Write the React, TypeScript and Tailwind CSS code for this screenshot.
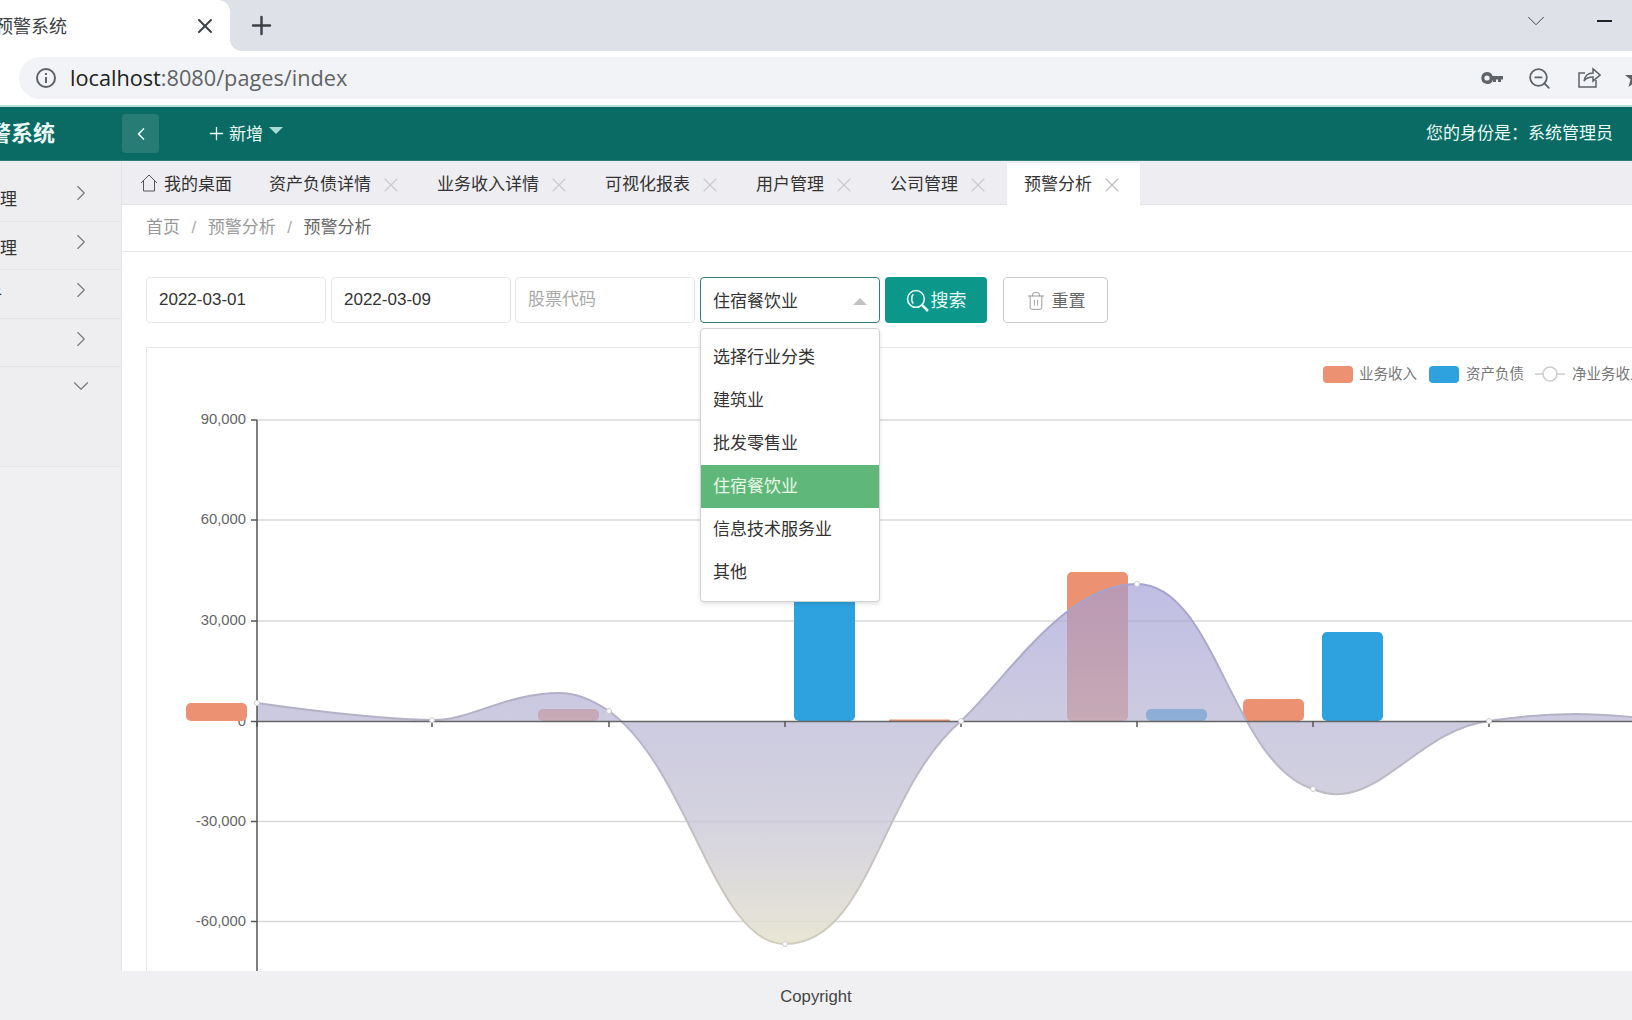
import { ChevronDown, ChevronLeft, ChevronRight, Plus, Trash2, X, ZoomOut } from 'lucide-react'

const menu = [
  { label: '资产管理', text: 'ml-[-51px]' },
  { label: '负债管理', text: 'ml-[-51px]' },
  { label: '预警分析', text: 'ml-[-66px]' },
  { label: '', text: '' },
  { label: '', text: '' },
]

const tabs = ['资产负债详情', '业务收入详情', '可视化报表', '用户管理', '公司管理']

const options = ['选择行业分类', '建筑业', '批发零售业', '住宿餐饮业', '信息技术服务业', '其他']

const yLabels = [
  { y: 419.5, text: '90,000' },
  { y: 519.5, text: '60,000' },
  { y: 620.5, text: '30,000' },
  { y: 721, text: '0' },
  { y: 821, text: '-30,000' },
  { y: 921, text: '-60,000' },
]

const xTicks = [257, 432, 609, 785, 961, 1137, 1313, 1489]

const markers = [
  [257, 703],
  [432, 720],
  [609, 711],
  [785, 944],
  [961, 721],
  [1137, 584],
  [1313, 789],
  [1489, 721],
]

const bars = [
  { x: 186, y: 703, h: 18, c: '#ec9171' },
  { x: 538, y: 709, h: 12, c: '#ec9171' },
  { x: 794, y: 560, h: 161, c: '#2ea1df' },
  { x: 889, y: 719.5, h: 2, c: '#ec9171' },
  { x: 1067, y: 572, h: 149, c: '#ec9171' },
  { x: 1146, y: 709, h: 12, c: '#2ea1df' },
  { x: 1243, y: 699, h: 22, c: '#ec9171' },
  { x: 1322, y: 632, h: 89, c: '#2ea1df' },
]

const curve =
  'M257,703 C320,712 385,719 432,720 C470,721 505,693 560,693 C580,693 597,703 609,711 C690,770 715,944 785,944 C870,944 880,790 961,721 C1010,675 1065,584 1137,584 C1215,584 1232,764 1313,789 C1375,816 1415,730 1489,721 C1515,717 1545,714 1575,714 C1600,714 1620,716 1632,717'

function BrowserBar() {
  return (
    <>
      <div className="flex h-[51px] shrink-0">
        <div className="w-[230px] bg-[#dee1e8]">
          <div className="flex h-full items-center justify-between rounded-tr-xl bg-white pr-[13px]">
            <span className="mt-[3px] ml-[-5px] text-[18px] text-[#3c4043]">预警系统</span>
            <X className="h-[24px] w-[24px] text-[#3c4043]" strokeWidth={2} />
          </div>
        </div>
        <div className="flex-1 bg-white">
          <div className="flex h-full items-center rounded-bl-xl bg-[#dee1e8]">
            <Plus className="ml-[17px] h-[29px] w-[29px] text-[#3c4043]" strokeWidth={2} />
            <ChevronDown className="mb-[10px] ml-auto h-[30px] w-[30px] text-[#3c4043]" strokeWidth={0.75} />
            <div className="mr-[20px] mb-[9px] ml-[46px] h-[1.5px] w-[15px] bg-[#222]" />
          </div>
        </div>
      </div>
      <div className="flex h-[54px] shrink-0 items-center bg-white pl-[19px]">
        <div className="flex h-[42px] flex-1 items-center rounded-l-full bg-[#f1f3f6]">
          <svg viewBox="0 0 22 22" className="ml-[16px] h-[22px] w-[22px]" fill="none" stroke="#5f6368" strokeWidth="2">
            <circle cx="11" cy="11" r="9" />
            <path d="M11 10v6" />
            <path d="M11 6v2" />
          </svg>
          <div className="mt-[1px] ml-[13px] font-['Open_Sans',sans-serif] text-[21.7px] text-[#5f6368]">
            <span className="text-[#202124]">localhost</span>:8080/pages/index
          </div>
          <svg viewBox="0 0 22 12" className="ml-auto h-[12px] w-[22px]" fill="#5f6368">
            <path d="M6 0a6 6 0 0 1 5.6 4H22v3.5h-2V10h-3V7.500h-2V10h-3V8a6 6 0 1 1-6-8Zm0 3.400a2.600 2.600 0 1 0 0 5.200 2.600 2.600 0 0 0 0-5.200Z" />
          </svg>
          <ZoomOut className="ml-[24px] h-[25px] w-[25px] text-[#5f6368]" strokeWidth={1.75} />
          <svg viewBox="0 0 24 24" className="ml-[25px] h-[24px] w-[24px]" fill="none" stroke="#5f6368" strokeWidth="1.5">
            <path d="M19 14v7H2V7h6" />
            <path d="M7 15c1-6 5-8 9-8V3l7 6-7 6v-4c-4 0-7 1-9 4Z" />
          </svg>
          <svg viewBox="0 0 24 24" className="mr-[-15px] ml-[22px] h-[24px] w-[24px]" fill="#5f6368">
            <path d="m12 2 3 7h7l-5.500 4.500 2 7.500-6.500-4.500L5.500 21l2-7.500L2 9h7Z" />
          </svg>
        </div>
      </div>
      <div className="h-[2px] shrink-0 bg-[#b9e0d9]" />
    </>
  )
}

function Header() {
  return (
    <div className="flex h-[54px] shrink-0 items-center border-b border-[#2d7f78] bg-[#096b64] text-[#eafaf7]">
      <div className="flex w-[122px] shrink-0 justify-end overflow-hidden pr-[67px]">
        <span className="shrink-0 text-[22px] font-bold">预警系统</span>
      </div>
      <div className="flex h-[39px] w-[37px] items-center justify-center rounded-sm bg-[#277d76]">
        <ChevronLeft className="h-[20px] w-[20px]" strokeWidth={2} />
      </div>
      <Plus className="ml-[47px] h-[21px] w-[21px]" strokeWidth={1.5} />
      <span className="mt-[2px] ml-[2px] text-[17px]">新增</span>
      <div className="mb-[6px] ml-[6px] h-0 w-0 border-x-[7px] border-t-[7px] border-x-transparent border-t-[#a8dcd4]" />
      <span className="mr-[19px] ml-auto text-[17px]">{'您的身份是\uFF1A系统管理员'}</span>
    </div>
  )
}

function Sidebar() {
  return (
    <div className="flex w-[122px] shrink-0 flex-col overflow-hidden border-r border-[#e4e4e6] bg-[#eeeef0] pt-[12px] text-[17px] text-[#333]">
      {menu.map((item, i) => (
        <div
          key={i}
          className={`flex shrink-0 justify-between border-b border-[#e6e6e8] pr-[27px] ${i === 4 ? 'h-[100px]' : 'h-[48.5px]'}`}
        >
          <span className={`mt-[14px] shrink-0 ${item.text}`}>{item.label}</span>
          {i === 4 ? (
            <ChevronDown className="mt-[6px] h-[26px] w-[26px] text-[#777]" strokeWidth={1} />
          ) : (
            <ChevronRight className="mt-[7px] h-[26px] w-[26px] text-[#777]" strokeWidth={1} />
          )}
        </div>
      ))}
      <div className="flex-1 bg-[#f0f0f2]" />
    </div>
  )
}

function TabBar() {
  return (
    <div className="flex h-[44px] shrink-0 border-b border-[#e2e2e4] bg-[#eeedf2] text-[17px] text-[#333]">
      <div className="flex items-center pt-[4px] pr-[20px] pl-[18px]">
        <svg viewBox="0 0 18 18" className="mb-[4px] h-[18px] w-[18px]" fill="none" stroke="#555" strokeWidth="1">
          <path d="M1 9 9 1l8 8" />
          <path d="M3.500 7v10h11V7" />
        </svg>
        <span className="ml-[6px]">我的桌面</span>
      </div>
      {tabs.map((tab) => (
        <div key={tab} className="flex items-center pt-[4px] pr-[22px] pl-[17px]">
          <span>{tab}</span>
          <X className="mr-[-5px] ml-[8px] h-[24px] w-[24px] text-[#cacacc]" strokeWidth={1.1} />
        </div>
      ))}
      <div className="mt-[2px] mb-[-1px] flex items-center bg-white pt-[2px] pr-[21px] pl-[17px]">
        <span>预警分析</span>
        <X className="mr-[-5px] ml-[8px] h-[24px] w-[24px] text-[#bcbcbe]" strokeWidth={1.1} />
      </div>
    </div>
  )
}

function Toolbar() {
  return (
    <div className="relative flex h-[46px] shrink-0 text-[17px]">
      <input
        readOnly
        defaultValue="2022-03-01"
        className="h-full w-[180px] rounded-sm border border-[#e6e6e6] px-[12px] text-[#333] outline-none"
      />
      <input
        readOnly
        defaultValue="2022-03-09"
        className="ml-[5px] h-full w-[180px] rounded-sm border border-[#e6e6e6] px-[12px] text-[#333] outline-none"
      />
      <input
        readOnly
        placeholder="股票代码"
        className="ml-[4px] h-full w-[180px] rounded-sm border border-[#e6e6e6] px-[12px] outline-none placeholder:text-[#aaa]"
      />
      <div className="ml-[5px] flex h-full w-[180px] items-center justify-between rounded-sm border border-[#2f7f79] px-[12px] pt-[2px] text-[#333]">
        <span className="pt-[2px]">住宿餐饮业</span>
        <div className="h-0 w-0 border-x-[7px] border-b-[7px] border-x-transparent border-b-[#c2c2c2]" />
      </div>
      <button className="ml-[5px] flex h-full w-[102px] items-center justify-center gap-[2px] rounded-sm bg-[#0b978a] pt-[2px] text-[18px] text-[#eafaf7]">
        <svg viewBox="0 0 22 22" className="mb-[2px] h-[23px] w-[23px]" fill="none" stroke="#eafaf7" strokeWidth="1.500">
          <circle cx="9.500" cy="9.500" r="8" />
          <path d="M7 5c-2 2-2 7 0 9" />
          <path d="m15 15 6 6" strokeWidth="2.500" />
        </svg>
        搜索
      </button>
      <button className="ml-[16px] flex h-full w-[105px] items-center justify-center gap-[6px] rounded-sm border border-[#c9c9c9] pt-[3px] text-[#666]">
        <Trash2 className="mb-[2px] h-[20px] w-[20px] text-[#888]" strokeWidth={1} />
        重置
      </button>
      <div className="absolute top-[51px] left-[554px] z-10 w-[180px] rounded-sm border border-[#d2d2d2] bg-white pt-[7px] pb-[7px] text-[17px] text-[#333] shadow-[0_2px_4px_rgba(0,0,0,0.12)]">
        {options.map((opt) => (
          <div
            key={opt}
            className={`flex h-[43px] items-center px-[12px] ${opt === '住宿餐饮业' ? 'bg-[#5fb87a] text-[#e8f8e8]' : ''}`}
          >
            {opt}
          </div>
        ))}
      </div>
    </div>
  )
}

function Chart() {
  return (
    <svg viewBox="147 348 1485 623" className="block h-[623px] w-[1485px]">
      <defs>
        <linearGradient id="areaFill" gradientUnits="userSpaceOnUse" x1="0" y1="584" x2="0" y2="944">
          <stop offset="0" stopColor="#a09cd5" stopOpacity="0.66" />
          <stop offset="0.383" stopColor="#b7b5d3" stopOpacity="0.7" />
          <stop offset="0.66" stopColor="#cac8d7" stopOpacity="0.8" />
          <stop offset="1" stopColor="#e6e3d0" stopOpacity="0.9" />
        </linearGradient>
        <linearGradient id="areaLine" gradientUnits="userSpaceOnUse" x1="0" y1="584" x2="0" y2="944">
          <stop offset="0" stopColor="#a5a2cc" />
          <stop offset="1" stopColor="#cfcdbc" />
        </linearGradient>
      </defs>
      {/* legend */}
      <rect x="1323" y="366" width="30" height="17" rx="4" fill="#ec9171" />
      <text x="1359" y="378.5" fontSize="14.5" fill="#777">业务收入</text>
      <rect x="1429" y="366" width="30" height="17" rx="4" fill="#2ea1df" />
      <text x="1466" y="378.5" fontSize="14.5" fill="#777">资产负债</text>
      <path d="M1535 374h30" stroke="#ccc" strokeWidth="1.500" />
      <circle cx="1550" cy="374" r="7" fill="#fff" stroke="#ccc" strokeWidth="1.500" />
      <text x="1572" y="378.5" fontSize="14.5" fill="#777">净业务收入</text>

      {yLabels.map((l) => (
        <g key={l.text}>
          {l.text !== '0' && <path d={`M257 ${l.y + 0.5}H1632`} stroke="#d8d8d8" strokeWidth="1.500" />}
          <path d={`M251 ${l.y + 0.5}H257`} stroke="#555" strokeWidth="1.500" />
          <text x="246" y={l.y + 4.5} textAnchor="end" fontSize="14.8" fill="#666">{l.text}</text>
        </g>
      ))}
      {bars.map((b) => (
        <rect key={b.x} x={b.x} y={b.y} width="61" height={b.h} rx={Math.min(5, b.h / 2)} fill={b.c} />
      ))}
      <path d={`${curve} L1632,721 L257,721 Z`} fill="url(#areaFill)" />
      <path d={curve} fill="none" stroke="url(#areaLine)" strokeWidth="2" />
      <path d="M257 420V971" stroke="#555" strokeWidth="1.500" />
      <path d="M257 721.500H1632" stroke="#666" strokeWidth="1.500" />
      {xTicks.map((x) => (
        <path key={x} d={`M${x} 721V727`} stroke="#555" strokeWidth="1.500" />
      ))}
      {markers.map(([x, y]) => (
        <circle key={x} cx={x} cy={y} r="2.500" fill="#fff" stroke="#ccc" strokeWidth="1" />
      ))}
    </svg>
  )
}

export default function App() {
  return (
    <div className="flex h-[1020px] w-[1632px] flex-col overflow-hidden bg-white font-['Liberation_Sans','Noto_Sans_CJK_SC',sans-serif]">
      <BrowserBar />
      <Header />
      <div className="flex min-h-0 flex-1">
        <Sidebar />
        <div className="flex min-w-0 flex-1 flex-col">
          <TabBar />
          <div className="flex h-[47px] shrink-0 items-center border-b border-[#e8e8e8] px-[24px] text-[17px] text-[#999]">
            <span>首页</span>
            <span className="mx-[11.5px] text-[#aaa]">/</span>
            <span>预警分析</span>
            <span className="mx-[11.5px] text-[#aaa]">/</span>
            <span className="text-[#666]">预警分析</span>
          </div>
          <div className="min-h-0 flex-1 overflow-hidden pt-[25px] pl-[24px]">
            <Toolbar />
            <div className="mt-[24px] w-[1600px] border-t border-l border-[#e8e8e8]">
              <Chart />
            </div>
          </div>
        </div>
      </div>
      <div className="flex h-[49px] shrink-0 items-center justify-center bg-[#f0f0f2] pt-[2px] text-[16.7px] text-[#444]">
        Copyright
      </div>
    </div>
  )
}
